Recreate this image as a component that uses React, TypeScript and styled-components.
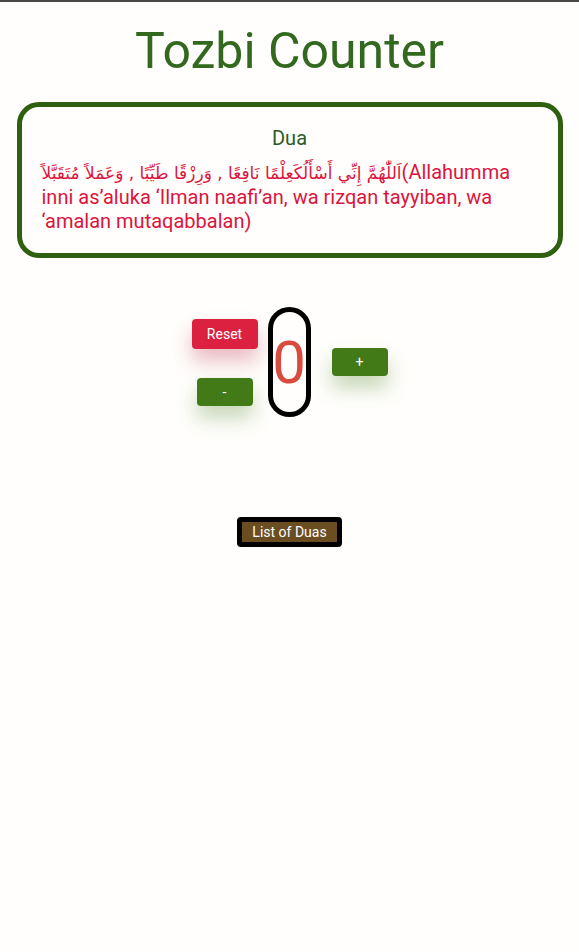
import styled, { createGlobalStyle } from 'styled-components';

const GlobalStyle = createGlobalStyle`
  html, body {
    margin: 0;
    padding: 0;
    background: #fffefc;
    font-family: Roboto, "Noto Sans", "DejaVu Sans", sans-serif;
  }
`;

const Page = styled.div`
  min-height: 952px;
  border-top: 2px solid #474747;
  display: flex;
  flex-direction: column;
  align-items: center;
  box-sizing: border-box;
`;

const Title = styled.h1`
  margin: 18px 0 0;
  font-size: 50px;
  font-weight: 400;
  line-height: 62px;
  color: #33691e;
`;

const DuaCard = styled.div`
  box-sizing: border-box;
  width: 546px;
  margin-top: 20px;
  border: 5px solid #2f6010;
  border-radius: 22px;
  padding: 17px 20px 20px 20px;
  h2 {
    margin: 0 0 8px;
    text-align: center;
    font-size: 20px;
    font-weight: 400;
    line-height: 28px;
    color: #2b5a27;
  }
  p {
    margin: 0;
    font-size: 20px;
    line-height: 24px;
    color: #dc143c;
  }
`;

const Arabic = styled.span`
  font-family: "DejaVu Sans", sans-serif;
  font-size: 17px;
`;

const CounterArea = styled.div`
  margin-top: 49px;
  display: flex;
  align-items: center;
  justify-content: center;
`;

const LeftColumn = styled.div`
  display: flex;
  flex-direction: column;
  align-items: center;
  gap: 29px;
  margin-right: 10px;
`;

const ActionButton = styled.button<{ $bg: string; $w: number; $h: number; $shadow: string }>`
  width: ${(p) => p.$w}px;
  height: ${(p) => p.$h}px;
  border: none;
  border-radius: 4px;
  background: ${(p) => p.$bg};
  color: #fff;
  font-family: Roboto, sans-serif;
  font-size: 14px;
  padding: 0;
  box-shadow: 0 12px 20px ${(p) => p.$shadow};
  cursor: pointer;
`;

const CountBox = styled.div`
  box-sizing: border-box;
  width: 43px;
  height: 110px;
  border: 5px solid #000;
  border-radius: 22px;
  display: flex;
  align-items: center;
  justify-content: center;
  font-size: 60px;
  color: #d94b3e;
  margin-right: 21px;
`;

const ListButton = styled.button`
  margin-top: 100px;
  box-sizing: border-box;
  width: 105px;
  height: 30px;
  border: 5px solid #000;
  border-radius: 4px;
  background: #6b4d22;
  color: #fff;
  font-family: Roboto, sans-serif;
  font-size: 14px;
  padding: 0;
  cursor: pointer;
`;

export default function App() {
  return (
    <>
      <GlobalStyle />
      <Page>
        <Title>Tozbi Counter</Title>
        <DuaCard>
          <h2>Dua</h2>
          <p>
            <Arabic>اَللّٰهُمَّ إِنِّي أَسْأَلُكَعِلْمًا نَافِعًا , وَرِزْقًا طَيِّبًا , وَعَمَلاً مُتَقَبَّلاً</Arabic>
            (Allahumma inni as’aluka ‘Ilman naafi’an, wa rizqan tayyiban, wa ‘amalan mutaqabbalan)
          </p>
        </DuaCard>
        <CounterArea>
          <LeftColumn>
            <ActionButton $bg="#dc2140" $w={66} $h={30} $shadow="rgba(180, 30, 60, 0.3)">
              Reset
            </ActionButton>
            <ActionButton $bg="#417a17" $w={56} $h={28} $shadow="rgba(65, 122, 23, 0.3)">
              -
            </ActionButton>
          </LeftColumn>
          <CountBox>0</CountBox>
          <ActionButton $bg="#417a17" $w={56} $h={28} $shadow="rgba(65, 122, 23, 0.3)">
            +
          </ActionButton>
        </CounterArea>
        <ListButton>List of Duas</ListButton>
      </Page>
    </>
  );
}
